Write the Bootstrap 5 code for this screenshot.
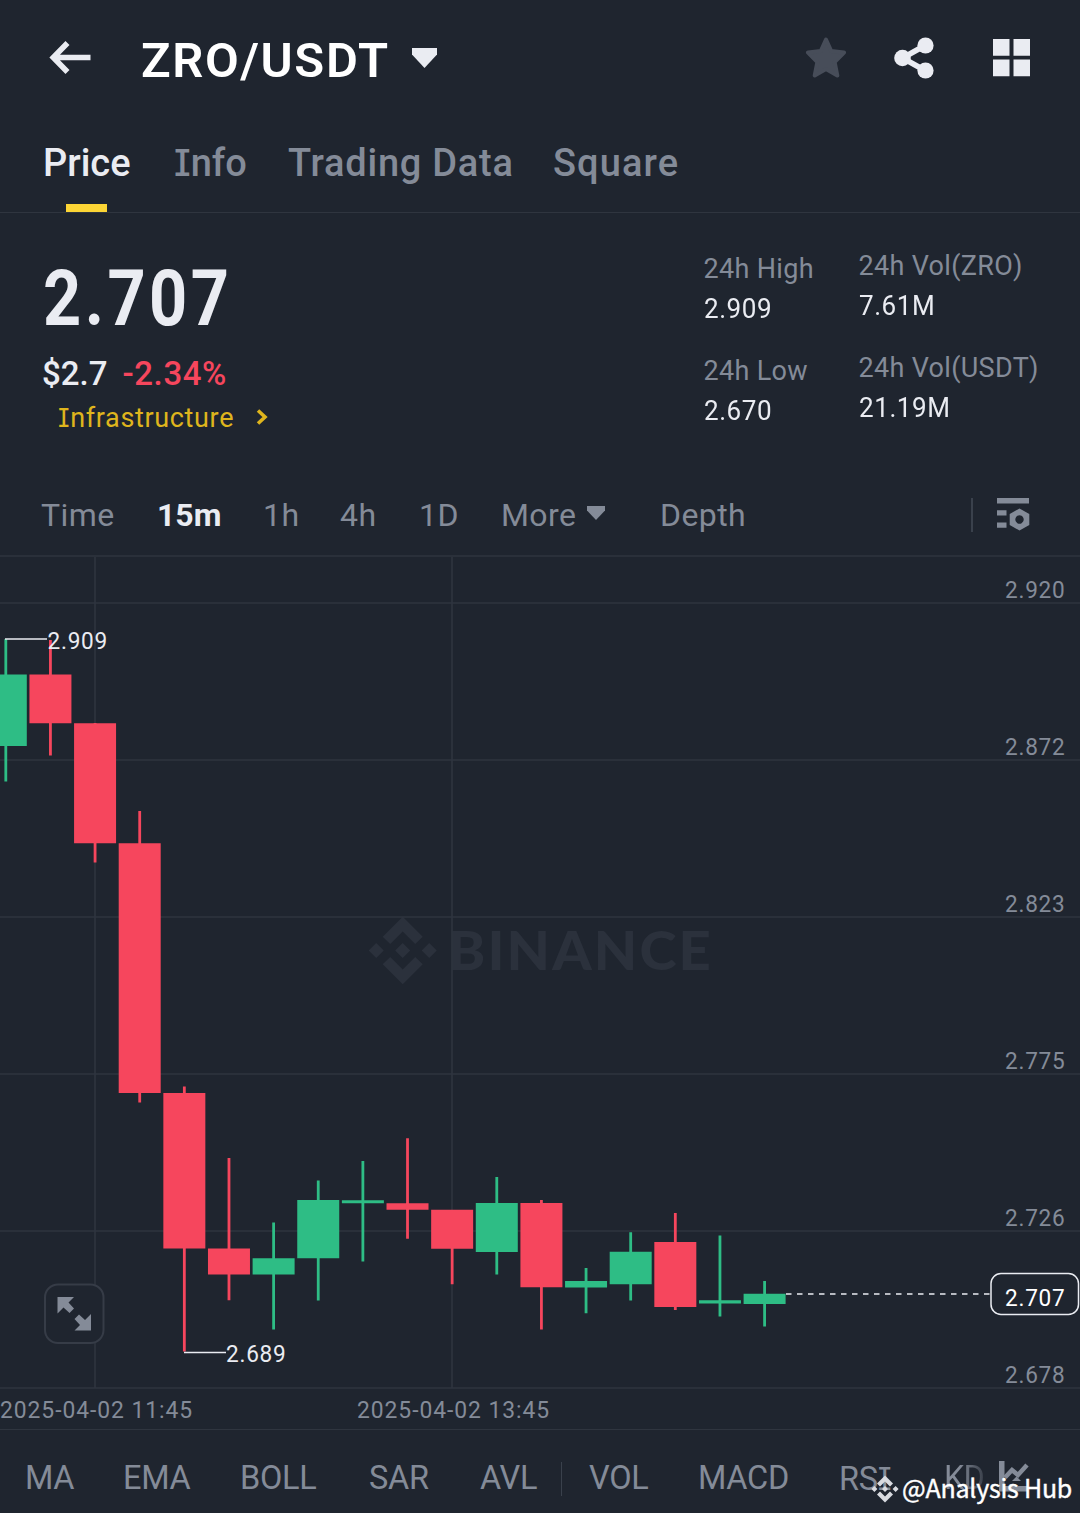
<!DOCTYPE html>
<html lang="en" data-bs-theme="dark">
<head>
<meta charset="utf-8">
<meta name="viewport" content="width=device-width, initial-scale=1">
<title>ZRO/USDT</title>
<link href="https://cdn.jsdelivr.net/npm/bootstrap@5.3.0/dist/css/bootstrap.min.css" rel="stylesheet">
<style>
:root{--bg:#1f252f;--line:#2f353f;--muted:#848b98;--fg:#eaecf2;--up:#2ebd85;--down:#f6465d}
body{background:var(--bg);color:var(--fg);font-family:Roboto,"Liberation Sans",sans-serif;width:1080px;height:1513px;overflow:hidden}
svg{display:block;flex:none}
.serif-i{font-family:Inter,Roboto,sans-serif;font-feature-settings:"cv08","ss02";font-size:.97em}
.topbar{height:120px;padding:0 50px 0 49px}
.pair{font-size:49px;font-weight:600;line-height:121px;color:#fff;letter-spacing:1.6px;margin-left:50px}
.lift{margin-bottom:5px}
.caret-gap{margin-left:21px}
.tabs{height:93px;padding-left:43px;border-bottom:1px solid var(--line);display:grid;grid-template-columns:131px 114px 265px 160px;font-size:38px;font-weight:500;line-height:86px;color:var(--muted)}
.tabs .on{color:var(--fg)}
.tabs .loose{letter-spacing:.75px}
.tabs .wide{letter-spacing:1.1px}
.tabs .on::after{content:"";display:block;width:41px;height:8px;margin:-2px 0 0 23px;background:#fcd535}
.summary{height:262px}
.headline{padding:41px 0 0 42px}
.last{font-size:77px;font-weight:700;line-height:91px;letter-spacing:4px;transform:scaleX(.865);transform-origin:0 50%;margin-left:1px}
.change{font-size:33px;font-weight:500;line-height:44px;margin-top:7px;gap:15px}
.change .down{letter-spacing:.6px}
.down{color:var(--down)}
.topic{font-size:27px;line-height:44px;color:#dfb51d;padding-left:16px;gap:22px;letter-spacing:.65px}
.topic svg{margin-bottom:2px}
.stats{font-size:27px;line-height:40px;padding-top:36px}
.stats .lbl{color:var(--muted);white-space:nowrap;letter-spacing:.32px}
.stats .val{font-size:28px;margin-bottom:22px;letter-spacing:.6px;transform:scaleX(.93);transform-origin:0 50%}
.s1{width:155px}
.s2{width:221.5px;margin-top:-3px}
.frames{height:82px;border-bottom:2px solid #2a303a;font-size:32px;line-height:83px;color:var(--muted)}
.frames .cells{display:grid;grid-template-columns:116px 106px 77px 79px 82px 159px 120px;padding-left:41px;width:971px;letter-spacing:.4px}
.frames .on{color:var(--fg);font-weight:700;letter-spacing:0}
.vr-line{width:2px;height:34px;background:#3a414c}
.indicators .vr-line{width:1px}
.indicators{height:84px;border-top:1px solid var(--line);position:relative;font-size:32.5px;line-height:97px;color:var(--muted);display:grid;grid-template-columns:98px 117px 129px 111px 81px 28px 109px 141px 105px 54px 60px;padding-left:25px;letter-spacing:-.3px}
.indicators .fade-txt{background:linear-gradient(90deg,#848b98 30%,#2a303a 90%);-webkit-background-clip:text;background-clip:text;color:transparent;width:50px;letter-spacing:-1px}
.credit{position:absolute;left:869px;top:42px}
</style>
</head>
<body>
<header class="topbar d-flex align-items-center">
  <svg class="lift" width="42" height="34" viewBox="0 0 42 34" fill="none" stroke="#eaecf2" stroke-width="5.6"><path d="M41.500 16.500H5M18.500 2 4.300 16.500 18.500 31"/></svg>
  <div class="pair">ZRO/USDT</div>
  <svg class="lift caret-gap" width="27" height="20" viewBox="0 0 27 20"><path fill="#eaecf2" d="M1 0H26V6.500L13.500 20 1 6.500Z"/></svg>
  <div class="d-flex align-items-center ms-auto lift">
    <svg width="42" height="42" viewBox="0 0 42 42"><path fill="#474d59" stroke="#474d59" stroke-width="4" stroke-linejoin="round" d="M21 2.500 26.200 14 39 15.500 29.600 25 32.300 38.500 21 32 9.700 38.500 12.400 25 3 15.500 15.800 14Z"/></svg>
    <svg style="margin-left:47px" width="40" height="42" viewBox="0 0 40 42"><g fill="#eaecf2"><circle cx="8.500" cy="21" r="8.300"/><circle cx="31.500" cy="8.500" r="8.100"/><circle cx="31.500" cy="33.500" r="8.100"/></g><path d="M31 8.500 8.500 21 31 33.500" fill="none" stroke="#eaecf2" stroke-width="5.500"/></svg>
    <svg style="margin-left:58px" width="38" height="38" viewBox="0 0 38 38"><path fill="#eaecf2" d="M1 0h16.500v16.800H1zM21.500 0H38v16.800H21.500zM1 20.500h16.500v16.800H1zM21.500 20.500H38v16.800H21.500z"/></svg>
  </div>
</header>

<nav class="tabs">
  <div class="on">Price</div>
  <div><span class="serif-i">I</span>nfo</div>
  <div class="loose">Trading Data</div>
  <div class="wide">Square</div>
</nav>

<section class="summary d-flex">
  <div class="headline">
    <div class="last">2.707</div>
    <div class="change d-flex"><span>$2.7</span><span class="down">-2.34%</span></div>
    <div class="topic d-flex align-items-center"><span><span class="serif-i">I</span>nfrastructure</span>
      <svg width="12" height="16" viewBox="0 0 12 16"><path d="M2 1.500 9 8 2 14.500" fill="none" stroke="#dfb51d" stroke-width="3.600"/></svg></div>
  </div>
  <div class="stats d-flex ms-auto">
    <div class="s1"><div class="lbl">24h High</div><div class="val">2.909</div><div class="lbl">24h Low</div><div class="val">2.670</div></div>
    <div class="s2"><div class="lbl">24h Vol(ZRO)</div><div class="val">7.61M</div><div class="lbl">24h Vol(USDT)</div><div class="val">21.19M</div></div>
  </div>
</section>

<nav class="frames d-flex align-items-center">
  <div class="cells"><div>Time</div><div class="on">15m</div><div>1h</div><div>4h</div><div>1D</div>
    <div class="d-flex align-items-center">More<svg class="lift" style="margin-left:11px" width="18" height="14" viewBox="0 0 18 14"><path fill="#848b98" d="M0 0H18V4.500L9 14 0 4.500Z"/></svg></div>
    <div>Depth</div></div>
  <div class="vr-line"></div>
  <svg style="margin-left:24px" width="33" height="36" viewBox="0 0 33 36" fill="#848b98"><path d="M0 1h32v5.500H0zM0 13.300h9.500v5.200H0zM0 25.500h9.500v5.200H0z"/><path fill-rule="evenodd" d="M22.500 11.500 32.300 17V28L22.500 33.500 12.700 28V17ZM22.500 18.300a4.200 4.200 0 1 0 .01 0Z"/></svg>
</nav>

<svg id="chart" width="1080" height="872" viewBox="0 557 1080 872" font-family="Roboto, sans-serif">
  <g fill="#2b313c">
    <g id="brand" transform="translate(402.700 950.500) scale(2.500)"><path d="M0-13.500 8-5.500 5-2.600 0-7.600-5-2.600-8-5.500ZM0 13.500 8 5.500 5 2.600 0 7.600-5 2.600-8 5.500ZM0-3 3 0 0 3-3 0ZM-10.600-3-7.600 0-10.600 3-13.600 0ZM10.600-3 13.600 0 10.600 3 7.600 0Z"/></g>
    <text x="448" y="969.500" font-family="Lato, sans-serif" font-weight="900" font-size="53" letter-spacing="2" textLength="265" lengthAdjust="spacingAndGlyphs">BINANCE</text>
  </g>
  <path stroke="#2f353f" stroke-width="1.600" fill="none" d="M0 603H1080M0 760H1080M0 917H1080M0 1074H1080M0 1231H1080M0 1388H1080M95 557V1388M452 557V1388"/>
  <g id="candles"></g>
  <path stroke="#eaecf2" stroke-width="1.500" fill="none" d="M5 639H47M184 1352.500H226"/>
  <g fill="#eaecf2" font-size="24.500" letter-spacing=".8">
    <text x="47.500" y="649" textLength="60.500" lengthAdjust="spacingAndGlyphs">2.909</text>
    <text x="226" y="1362" textLength="60.500" lengthAdjust="spacingAndGlyphs">2.689</text>
  </g>
  <g id="axis" fill="#848b98" font-size="24.500" letter-spacing=".8"></g>
  <g fill="#848b98" font-size="24.500" letter-spacing="1">
    <text x="0" y="1418" textLength="193" lengthAdjust="spacingAndGlyphs">2025-04-02 11:45</text>
    <text x="357" y="1418" textLength="193" lengthAdjust="spacingAndGlyphs">2025-04-02 13:45</text>
  </g>
  <path d="M786 1294H991" stroke="#eaecf2" stroke-width="1.700" stroke-dasharray="5.500 5.500"/>
  <rect x="991" y="1273.500" width="87.500" height="41" rx="10" fill="#1f252f" stroke="#eaecf2" stroke-width="1.500"/>
  <text x="1005" y="1306" fill="#fff" font-size="24.500" letter-spacing=".8" textLength="60.500" lengthAdjust="spacingAndGlyphs">2.707</text>
  <rect x="45" y="1284.500" width="58.500" height="58.500" rx="13" fill="#1f252f" stroke="#363c47" stroke-width="2"/>
  <g fill="#848b98"><path d="M57.500 1297H74L68.500 1302.500 74 1308.500 69.500 1313 63.500 1307.500 57.500 1313.500Z"/><path d="M91 1330.500H74.500L80 1325 74.500 1319 79 1314.500 85 1320 91 1314Z"/></g>
</svg>

<footer class="indicators">
  <div>MA</div><div>EMA</div><div>BOLL</div><div>SAR</div><div>AVL</div>
  <div class="d-flex align-items-center"><div class="vr-line"></div></div>
  <div>VOL</div><div>MACD</div><div>RS<span class="serif-i">I</span></div><div class="fade-txt">KD</div>
  <svg style="margin:31px 0 0 1px" width="32" height="32" viewBox="0 0 32 32"><path d="M0 0H5.500V25H29V30.500H0Z" fill="#848b98"/><path d="M6 16.500 13 9 19 14 28 4" fill="none" stroke="#848b98" stroke-width="4.500"/><path d="M13 20 17.500 15.500 22 20Z" fill="#848b98"/></svg>
  <svg class="credit" width="211" height="40" viewBox="869 1472 211 40">
    <path transform="translate(885 1489)" fill="#d9dbe0" d="M0-13.500 8-5.500 5-2.600 0-7.600-5-2.600-8-5.500ZM0 13.500 8 5.500 5 2.600 0 7.600-5 2.600-8 5.500ZM0-3 3 0 0 3-3 0ZM-10.600-3-7.600 0-10.600 3-13.600 0ZM10.600-3 13.600 0 10.600 3 7.600 0Z"/>
    <text x="902" y="1498" fill="#fff" stroke="#fff" stroke-width=".4" font-family="'Noto Sans CJK SC', sans-serif" font-weight="400" font-size="25" textLength="170">@Analysis Hub</text>
  </svg>
</footer>

<script src="https://cdn.jsdelivr.net/npm/bootstrap@5.3.0/dist/js/bootstrap.bundle.min.js"></script>
<script>
// Each candle: direction, high, body top, body bottom, low (chart coordinates)
const candles = [
  ['u',639,674.5,746,781.5],['d',640,674.5,723.3,755.5],['d',723,723.3,843.3,862.5],['d',811,843.3,1093,1102.5],
  ['d',1086.5,1093,1248.6,1351.5],['d',1158,1248.6,1274.6,1300.3],['u',1222.5,1258.3,1274.6,1329.5],['u',1180.5,1200,1258.3,1300.5],
  ['u',1161,1200.3,1203.3,1261.5],['d',1138.3,1203.2,1209.8,1238.8],['d',1210,1209.8,1248.7,1284.3],['u',1177,1203,1252,1274.5],
  ['d',1200,1203,1287.3,1329.5],['u',1268,1281,1287.5,1313.3],['u',1232.3,1251.8,1284.2,1300.5],['d',1213,1242,1307,1310],
  ['u',1235.5,1300.2,1303.6,1316.5],['u',1281,1293.8,1304,1326.5]
];
document.getElementById('candles').innerHTML = candles.map(([d,h,t,b,l],i)=>{
  const x = 5.8 + 44.635*i, c = d==='u' ? '#2ebd85' : '#f6465d';
  return `<path fill="${c}" d="M${x-1.4} ${h}h2.800V${l}h-2.800ZM${x-21} ${t}h42V${b}h-42Z"/>`;
}).join('');
document.getElementById('axis').innerHTML = ['2.920','2.872','2.823','2.775','2.726','2.678'].map((p,i)=>
  `<text x="1005" y="${598+157*i}" textLength="60.500" lengthAdjust="spacingAndGlyphs">${p}</text>`).join('');
</script>
</body>
</html>
